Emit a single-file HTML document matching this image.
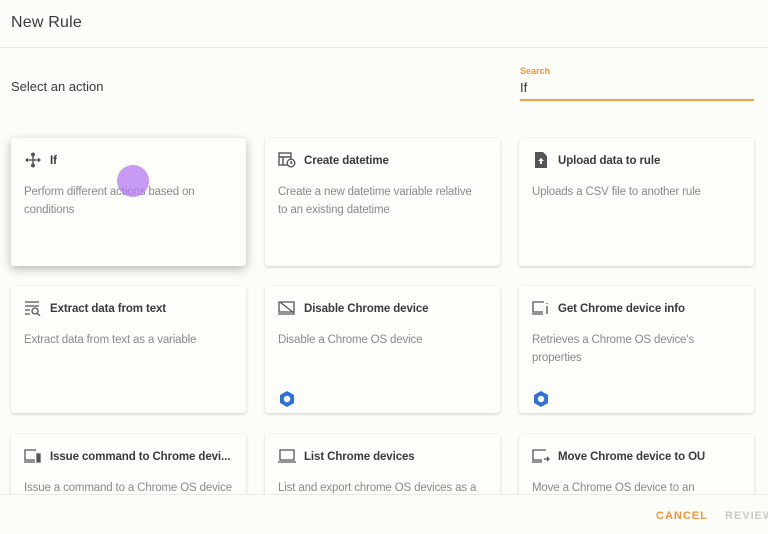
<!DOCTYPE html>
<html><head><meta charset="utf-8"><style>
*{margin:0;padding:0;box-sizing:border-box}
body{width:768px;height:534px;overflow:hidden;background:#fcfcf8;font-family:"Liberation Sans",sans-serif;position:relative;color:#333}
.hdr{position:absolute;left:0;top:0;width:768px;height:48px;border-bottom:1px solid #ebebe6}
.hdr h1{position:absolute;left:11px;top:14px;font-size:16px;font-weight:normal;color:#3a3a3a;letter-spacing:.2px}
.sel{position:absolute;left:11px;top:79px;font-size:13px;color:#3a3a3a}
.slab{position:absolute;left:520px;top:66px;font-size:9px;color:#f0953a;font-weight:bold}
.sval{position:absolute;left:520px;top:80px;font-size:13px;color:#333}
.sline{position:absolute;left:520px;top:99px;width:234px;height:2px;background:#f2a04c}
.card{position:absolute;width:235px;background:#fdfdf9;border-radius:3px;box-shadow:0 1px 3px rgba(0,0,0,.18)}
.card.hov{box-shadow:0 3px 10px rgba(0,0,0,.28)}
.t{position:absolute;left:39px;top:17px;font-size:11.5px;font-weight:bold;color:#3a3a3a;white-space:nowrap;letter-spacing:-.1px}
.d{position:absolute;left:13px;top:45px;width:200px;font-size:11.5px;line-height:18px;color:#8a8a8a;letter-spacing:-.15px}
.ic{position:absolute;left:13px;top:14px;width:18px;height:16px}
.hex{position:absolute;left:13px;top:104px}
.foot{position:absolute;left:0;top:494px;width:768px;height:40px;background:#fcfcf8;border-top:1px solid #ebebe6}
.cancel{position:absolute;left:656px;top:510px;font-size:11px;font-weight:bold;color:#f0953a;letter-spacing:1px}
.rev{position:absolute;left:725px;top:510px;font-size:11px;font-weight:bold;color:#c8c8c4;letter-spacing:1px}
.dot{position:absolute;left:117px;top:165px;width:32px;height:32px;border-radius:50%;background:rgba(180,120,240,.75)}
</style></head><body>
<div class="hdr"><h1>New Rule</h1></div>
<div class="sel">Select an action</div>
<div class="slab">Search</div>
<div class="sval">If</div>
<div class="sline"></div>

<div class="card hov" style="left:11px;top:138px;height:128px">
<svg class="ic" viewBox="0 0 18 16" fill="#555"><circle cx="9" cy="2.5" r="2"/><circle cx="9" cy="13.5" r="2"/><rect x="8.3" y="3" width="1.4" height="10"/><path d="M1 8l3-2.5v5zM17 8l-3-2.5v5z"/><rect x="3" y="7.3" width="12" height="1.4"/></svg>
<div class="t">If</div>
<div class="d">Perform different actions based on conditions</div></div>

<div class="card" style="left:265px;top:138px;height:128px">
<svg class="ic" viewBox="0 0 18 16" fill="none" stroke="#555" stroke-width="1.4"><rect x="1" y="1" width="12" height="12"/><path d="M1 5h12M5 5v8"/><circle cx="13" cy="11" r="3.8" fill="#fdfdf9"/><path d="M13 9v2.2h1.5"/></svg>
<div class="t">Create datetime</div>
<div class="d">Create a new datetime variable relative to an existing datetime</div></div>

<div class="card" style="left:519px;top:138px;height:128px">
<svg class="ic" viewBox="0 0 18 16"><path d="M3 0h8l4 4v12H3z" fill="#555"/><path d="M9 6l-3 3h2v3h2V9h2z" fill="#fff"/></svg>
<div class="t">Upload data to rule</div>
<div class="d">Uploads a CSV file to another rule</div></div>

<div class="card" style="left:11px;top:286px;height:127px">
<svg class="ic" viewBox="0 0 18 16" fill="none" stroke="#555" stroke-width="1.3"><path d="M1 2h14M1 6h14M1 10h5M1 14h5"/><circle cx="11" cy="11" r="3"/><path d="M13 13l3 3"/></svg>
<div class="t">Extract data from text</div>
<div class="d">Extract data from text as a variable</div></div>

<div class="card" style="left:265px;top:286px;height:127px">
<svg class="ic" viewBox="0 0 18 16" fill="none" stroke="#555" stroke-width="1.3"><path d="M1 2h15v10H1zM0 14h17M2 2l14 11"/></svg>
<div class="t">Disable Chrome device</div>
<div class="d">Disable a Chrome OS device</div>
<svg class="hex" width="18" height="18" viewBox="0 0 18 18"><path d="M9 1l7 4v8l-7 4-7-4V5z" fill="#2f6fe0"/><circle cx="9" cy="9" r="3.2" fill="#fff"/></svg></div>

<div class="card" style="left:519px;top:286px;height:127px">
<svg class="ic" viewBox="0 0 18 16" fill="none" stroke="#555" stroke-width="1.3"><path d="M12 2H1v10h10M0 14h11M15 3v1M15 6v8"/></svg>
<div class="t">Get Chrome device info</div>
<div class="d">Retrieves a Chrome OS device's properties</div>
<svg class="hex" width="18" height="18" viewBox="0 0 18 18"><path d="M9 1l7 4v8l-7 4-7-4V5z" fill="#2f6fe0"/><circle cx="9" cy="9" r="3.2" fill="#fff"/></svg></div>

<div class="card" style="left:11px;top:434px;height:100px">
<svg class="ic" viewBox="0 0 18 16" fill="none" stroke="#555" stroke-width="1.3"><path d="M12 2H1v10h10M0 14h11"/><rect x="13" y="6" width="3" height="8" fill="#555"/></svg>
<div class="t">Issue command to Chrome devi...</div>
<div class="d" style="width:225px">Issue a command to a Chrome OS device</div></div>

<div class="card" style="left:265px;top:434px;height:100px">
<svg class="ic" viewBox="0 0 18 16" fill="none" stroke="#555" stroke-width="1.3"><path d="M2 2h14v10H2zM0 14h18"/></svg>
<div class="t">List Chrome devices</div>
<div class="d" style="width:225px">List and export chrome OS devices as a</div></div>

<div class="card" style="left:519px;top:434px;height:100px">
<svg class="ic" viewBox="0 0 18 16" fill="none" stroke="#555" stroke-width="1.3"><path d="M14 2H1v10h9M0 14h10M12 11h5M15 9l2 2-2 2"/></svg>
<div class="t">Move Chrome device to OU</div>
<div class="d">Move a Chrome OS device to an</div></div>

<div class="dot"></div>
<div class="foot"></div>
<div class="cancel">CANCEL</div>
<div class="rev">REVIEW</div>
</body></html>
